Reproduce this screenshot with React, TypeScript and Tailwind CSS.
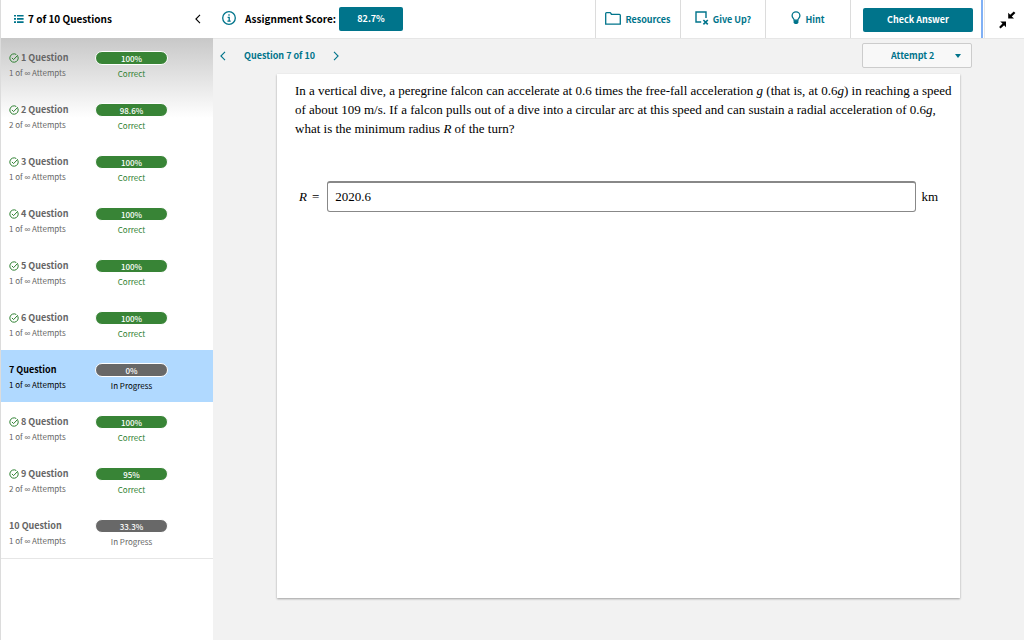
import { ReactNode, useState } from 'react';
import { clsx } from 'clsx';

interface Question {
  id: number;
  attempts: number;
  score: string;
  status: 'Correct' | 'In Progress';
}

const QUESTIONS: Question[] = [
  { id: 1, attempts: 1, score: '100%', status: 'Correct' },
  { id: 2, attempts: 2, score: '98.6%', status: 'Correct' },
  { id: 3, attempts: 1, score: '100%', status: 'Correct' },
  { id: 4, attempts: 1, score: '100%', status: 'Correct' },
  { id: 5, attempts: 1, score: '100%', status: 'Correct' },
  { id: 6, attempts: 1, score: '100%', status: 'Correct' },
  { id: 7, attempts: 1, score: '0%', status: 'In Progress' },
  { id: 8, attempts: 1, score: '100%', status: 'Correct' },
  { id: 9, attempts: 2, score: '95%', status: 'Correct' },
  { id: 10, attempts: 1, score: '33.3%', status: 'In Progress' },
];

function ListIcon() {
  return (
    <svg width="10" height="8" viewBox="0 0 10 8" fill="#00748b" aria-hidden="true">
      <path d="M0 0h2v1.6H0zM3 0h6.6v1.6H3zM0 3.1h2v1.7H0zM3 3.1h6.6v1.7H3zM0 6.2h2v1.7H0zM3 6.2h6.6v1.7H3z" />
    </svg>
  );
}

function Chevron({ direction }: { direction: 'left' | 'right' }) {
  return (
    <svg width="6" height="10" viewBox="0 0 6 10" fill="none" stroke="currentColor" strokeWidth="1.1" aria-hidden="true">
      <path d={direction === 'left' ? 'M5 .8.9 5 5 9.2' : 'M1 .8 5.1 5 1 9.2'} />
    </svg>
  );
}

function CheckIcon() {
  return (
    <svg width="10" height="10" viewBox="0 0 10 10" fill="none" stroke="#2f8132" aria-hidden="true">
      <path d="M8.8 3.2A4.2 4.2 0 1 1 7.3 1.5" />
      <path d="m2.9 4.9 1.7 1.7 4.2-4.4" />
    </svg>
  );
}

function InfoIcon() {
  return (
    <svg width="14" height="14" viewBox="0 0 14 14" fill="none" stroke="#00748b" className="mb-[2px]" aria-hidden="true">
      <circle cx="7" cy="7" r="6.3" strokeWidth="1.3" />
      <path d="M7 3.2v1.6M5.6 6.3H7.2v3.9M5.4 10.1h3.3" strokeWidth="1.3" />
    </svg>
  );
}

function FolderIcon() {
  return (
    <svg width="16" height="13" viewBox="0 0 16 13" fill="none" stroke="currentColor" strokeWidth="1.3" aria-hidden="true">
      <path d="M.7 12.2V1.6q0-.9.9-.9H5q.6 0 .9.7l.5 1h8q.9 0 .9.9v8.9z" />
    </svg>
  );
}

function GiveUpIcon() {
  return (
    <svg width="14" height="14" viewBox="0 0 14 14" fill="none" stroke="currentColor" aria-hidden="true">
      <path d="M6.2 11H1V1h10v6" strokeWidth="1.4" />
      <path d="m8.4 9 4.4 4.4m0-4.4-4.4 4.4" strokeWidth="1.6" />
    </svg>
  );
}

function BulbIcon() {
  return (
    <svg width="10" height="14" viewBox="0 0 10 14" fill="none" stroke="currentColor" aria-hidden="true">
      <path d="M3.2 9.2C3.2 7.6 1.1 7 1.1 4.8a3.9 3.9 0 0 1 7.8 0C8.9 7 6.8 7.6 6.8 9.2z" strokeWidth="1.3" />
      <path d="M2.6 9.2h4.8v2.6L6.2 13H3.8l-1.2-1.2z" fill="currentColor" stroke="none" />
    </svg>
  );
}

function CollapseIcon() {
  return (
    <svg width="17" height="18" viewBox="0 0 17 18" aria-hidden="true">
      <path d="M9.2 7.6V1.8l2 2L14.8.4l1.6 1.6-3.6 3.5 2.2 2.1zM7 10.4v5.9l-1.9-2-3.5 3.3L.1 16l3.4-3.4-2.3-2.2z" />
    </svg>
  );
}

function ToolbarButton({ icon, children }: { icon: ReactNode; children: ReactNode }) {
  return (
    <button
      type="button"
      className="flex w-[85px] items-center justify-center gap-1 border-l border-[#dcdcdc] text-[#00748b]"
    >
      <span className="pb-[2px]">{icon}</span>
      <span className="pt-[2px]">{children}</span>
    </button>
  );
}

function QuestionRow({ question, active, onSelect }: { question: Question; active: boolean; onSelect: () => void }) {
  const correct = question.status === 'Correct';

  return (
    <li>
      <button
        type="button"
        onClick={onSelect}
        className={clsx(
          'flex h-[52px] w-full items-start px-2 pt-[13px] text-left',
          active ? 'bg-[#b0d9ff] text-black' : 'text-[#666]'
        )}
      >
        <span className="w-[86px]">
          <span className="flex items-center gap-[2px] text-[9px] leading-[14px] font-bold">
            {correct && <CheckIcon />}
            {question.id} Question
          </span>
          <span className="block pt-px text-[8px] leading-[14px]">
            {question.attempts} of <span className="font-['Liberation_Sans',sans-serif]">∞</span> Attempts
          </span>
        </span>
        <span className="w-[73px] text-center text-[8px]">
          <span
            className={clsx(
              'block h-[14px] rounded-full border border-white leading-[13px] font-medium text-white',
              correct ? 'bg-[#388436]' : 'bg-[#686868]'
            )}
          >
            {question.score}
          </span>
          <span className={clsx('block pt-[2px] leading-[14px]', correct && 'text-[#2f8132]')}>{question.status}</span>
        </span>
      </button>
    </li>
  );
}

export default function App() {
  const [current, setCurrent] = useState(7);
  const [answer, setAnswer] = useState('2020.6');

  return (
    <div className="flex min-h-screen bg-[#f2f2f2] font-['Noto_Sans_CJK_SC',sans-serif] text-[10px] leading-[14px] text-black">
      <aside className="w-[213px] shrink-0 border-l border-[#dcdcdc] bg-white">
        <div className="flex h-[38px] items-center pr-3 pl-[13px]">
          <ListIcon />
          <h2 className="flex-1 pl-1 font-bold">{current} of 10 Questions</h2>
          <button type="button" aria-label="Collapse question list">
            <Chevron direction="left" />
          </button>
        </div>
        <ul className="border-b border-[#e6e6e6] bg-linear-to-b from-[#c8c8c8] to-white to-[80px]">
          {QUESTIONS.map((question) => (
            <QuestionRow
              key={question.id}
              question={question}
              active={question.id === current}
              onSelect={() => setCurrent(question.id)}
            />
          ))}
        </ul>
      </aside>

      <main className="flex min-w-0 flex-1 flex-col">
        <header className="flex h-[39px] border-b border-[#e6e6e6] bg-white font-bold">
          <div className="flex flex-1 items-center pl-[9px]">
            <InfoIcon />
            <span className="pl-[9px]">Assignment Score:</span>
            <span className="ml-[3px] flex h-6 w-16 items-center justify-center rounded-xs bg-[#00748b] text-[9px] text-white">
              82.7%
            </span>
          </div>
          <div className="flex text-[9px]">
            <ToolbarButton icon={<FolderIcon />}>Resources</ToolbarButton>
            <ToolbarButton icon={<GiveUpIcon />}>Give Up?</ToolbarButton>
            <ToolbarButton icon={<BulbIcon />}>Hint</ToolbarButton>
            <div className="flex items-center border-r-2 border-l border-r-[#80b0f5] border-l-[#dcdcdc] pt-[2px] pr-2 pl-3">
              <button type="button" className="h-6 w-[110px] rounded-xs bg-[#00748b] text-white">
                Check Answer
              </button>
            </div>
            <button
              type="button"
              aria-label="Exit full screen"
              className="ml-px flex w-10 items-center justify-end border-l border-[#e6e6e6] pt-[2px] pr-2"
            >
              <CollapseIcon />
            </button>
          </div>
        </header>

        <div className="flex h-[35px] items-center justify-between pr-[52px] pb-[2px] pl-[7px] text-[9px] font-bold text-[#00748b]">
          <nav className="flex items-center gap-[18px]">
            <button type="button" aria-label="Previous question">
              <Chevron direction="left" />
            </button>
            <span>Question {current} of 10</span>
            <button type="button" aria-label="Next question">
              <Chevron direction="right" />
            </button>
          </nav>
          <div className="grid w-[110px] items-center">
            <select
              aria-label="Attempt"
              className="col-start-1 row-start-1 h-[25px] appearance-none rounded-xs border border-[#ccc] bg-[#f8f8f8] pl-7"
            >
              <option>Attempt 2</option>
            </select>
            <svg
              width="6"
              height="4"
              viewBox="0 0 6 4"
              fill="currentColor"
              aria-hidden="true"
              className="pointer-events-none col-start-1 row-start-1 mr-[11px] justify-self-end"
            >
              <path d="M0 0h6L3 4z" />
            </svg>
          </div>
        </div>

        <section className="mx-16 mb-[42px] flex-1 bg-white pt-[7px] pr-1 pl-[18px] font-['Liberation_Serif',serif] text-[13px] leading-[19px] shadow-[0_1px_2px_rgba(0,0,0,0.35)]">
          <p>
            In a vertical dive, a peregrine falcon can accelerate at 0.6 times the free-fall acceleration <i>g</i> (that is,
            at 0.6<i>g</i>) in reaching a speed of about 109 m/s. If a falcon pulls out of a dive into a circular arc at
            this speed and can sustain a radial acceleration of 0.6<i>g</i>, what is the minimum radius <i>R</i> of the
            turn?
          </p>
          <div className="mt-[43px] flex items-center pr-[18px] pl-1">
            <label htmlFor="radius" className="flex gap-[5px]">
              <i>R</i>
              <span>=</span>
            </label>
            <input
              id="radius"
              type="text"
              value={answer}
              onChange={(e) => setAnswer(e.target.value)}
              className="mr-[5px] ml-2 h-[31px] min-w-0 flex-1 rounded-[3px] border border-t-2 border-[#888] px-[7px]"
            />
            <span>km</span>
          </div>
        </section>
      </main>
    </div>
  );
}
